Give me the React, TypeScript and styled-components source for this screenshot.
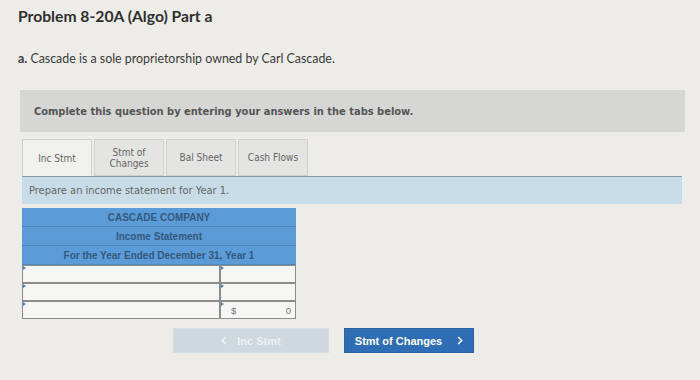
import styled, { createGlobalStyle } from 'styled-components'

const GlobalStyle = createGlobalStyle`
  html, body {
    margin: 0;
    padding: 0;
    background: #edece9;
  }
  body {
    font-family: Lato, 'Liberation Sans', sans-serif;
    color: #333;
  }
`

const Page = styled.div`
  width: 700px;
  height: 380px;
  padding: 6px 0 0 18px;
  box-sizing: border-box;
  overflow: hidden;
`

const Title = styled.h1`
  margin: 0;
  font-family: Lato, sans-serif;
  font-size: 15.7px;
  font-weight: 700;
  line-height: 20px;
  color: #2f2f2f;
`

const Intro = styled.p`
  margin: 25px 0 0;
  font-size: 12.4px;
  line-height: 16px;
  color: #3a3a3a;
  b {
    font-weight: 700;
  }
`

const Instruction = styled.div`
  margin: 23px 0 0 2px;
  width: 665px;
  height: 42px;
  display: flex;
  align-items: center;
  padding-left: 14px;
  box-sizing: border-box;
  background: #d6d6d4;
  font-family: 'DejaVu Sans Condensed', 'DejaVu Sans', sans-serif;
  font-size: 11px;
  font-weight: 700;
  color: #555;
`

const Work = styled.div`
  margin: 7px 0 0 4px;
  width: 660px;
`

const TabRow = styled.div`
  display: flex;
  gap: 2px;
  height: 37px;
`

const Tab = styled.div<{ active?: boolean }>`
  width: 70px;
  display: flex;
  align-items: center;
  justify-content: center;
  text-align: center;
  box-sizing: border-box;
  border: 1px solid #cfcfcc;
  border-bottom: ${p => (p.active ? 'none' : '1px solid #cfcfcc')};
  background: ${p => (p.active ? '#f0f0ee' : '#e4e4e2')};
  font-family: 'DejaVu Sans Condensed', 'DejaVu Sans', sans-serif;
  font-size: 10px;
  line-height: 11px;
  color: #666;
`

const Prompt = styled.div`
  height: 27px;
  border-top: 1px solid #8a9aa3;
  background: #c7dce6;
  display: flex;
  align-items: center;
  padding-left: 7px;
  font-family: 'DejaVu Sans Condensed', 'DejaVu Sans', sans-serif;
  font-size: 11px;
  color: #666;
`

const Sheet = styled.div`
  margin-top: 4px;
  width: 274px;
  display: grid;
  grid-template-columns: 198px 76px;
`

const Head = styled.div`
  grid-column: 1 / 3;
  height: 18px;
  display: flex;
  align-items: center;
  justify-content: center;
  background: #5b9bd8;
  border-bottom: 1px solid #4f87bd;
  font-family: 'Liberation Sans', Arial, sans-serif;
  font-size: 10px;
  font-weight: 700;
  color: #35597c;
`

const Cell = styled.div<{ right?: boolean }>`
  position: relative;
  height: 18px;
  box-sizing: border-box;
  background: #f6f6f4;
  border: 1px solid #8c8c8c;
  display: flex;
  align-items: center;
  justify-content: space-between;
  padding: 0 4px 0 10px;
  font-family: 'Liberation Sans', Arial, sans-serif;
  font-size: 9.5px;
  color: #777;
  &::before {
    content: '';
    position: absolute;
    left: 0;
    top: 0;
    border-left: 3px solid #5a7fa8;
    border-top: 2px solid transparent;
    border-bottom: 2px solid transparent;
  }
`

const Buttons = styled.div`
  margin: 9px 0 0 155px;
  display: flex;
  gap: 15px;
`

const NavButton = styled.div<{ primary?: boolean }>`
  height: 25px;
  width: ${p => (p.primary ? '130px' : '156px')};
  display: flex;
  align-items: center;
  justify-content: center;
  gap: ${p => (p.primary ? '15px' : '10px')};
  box-sizing: border-box;
  background: ${p => (p.primary ? '#2f6db4' : '#cfd8de')};
  border: 1px solid ${p => (p.primary ? '#2a62a3' : '#d6dee3')};
  font-family: 'Liberation Sans', Arial, sans-serif;
  font-size: 11px;
  font-weight: 700;
  color: ${p => (p.primary ? '#ffffff' : '#eef2f4')};
`

const Chevron = ({ dir }: { dir: 'left' | 'right' }) => (
  <svg width='6' height='9' viewBox='0 0 6 9'>
    <path
      d={dir === 'right' ? 'M1.2 1 L4.6 4.5 L1.2 8' : 'M4.8 1 L1.4 4.5 L4.8 8'}
      fill='none'
      stroke='currentColor'
      strokeWidth='1.6'
    />
  </svg>
)

const App = () => {
  const rows = [
    { label: '', amount: '', dollar: false },
    { label: '', amount: '', dollar: false },
    { label: '', amount: '0', dollar: true },
  ]

  return (
    <Page>
      <GlobalStyle />
      <Title>Problem 8-20A (Algo) Part a</Title>
      <Intro>
        <b>a.</b> Cascade is a sole proprietorship owned by Carl Cascade.
      </Intro>
      <Instruction>Complete this question by entering your answers in the tabs below.</Instruction>
      <Work>
        <TabRow>
          <Tab active>Inc Stmt</Tab>
          <Tab>
            Stmt of
            <br />
            Changes
          </Tab>
          <Tab>Bal Sheet</Tab>
          <Tab>Cash Flows</Tab>
        </TabRow>
        <Prompt>Prepare an income statement for Year 1.</Prompt>
        <Sheet>
          <Head>CASCADE COMPANY</Head>
          <Head>Income Statement</Head>
          <Head>For the Year Ended December 31, Year 1</Head>
          {rows.map((r, i) => [
            <Cell key={`l${i}`}>{r.label}</Cell>,
            <Cell key={`r${i}`} right>
              <span>{r.dollar ? '$' : ''}</span>
              <span>{r.amount}</span>
            </Cell>,
          ])}
        </Sheet>
      </Work>
      <Buttons>
        <NavButton>
          <Chevron dir='left' />
          Inc Stmt
        </NavButton>
        <NavButton primary>
          Stmt of Changes
          <Chevron dir='right' />
        </NavButton>
      </Buttons>
    </Page>
  )
}

export default App
